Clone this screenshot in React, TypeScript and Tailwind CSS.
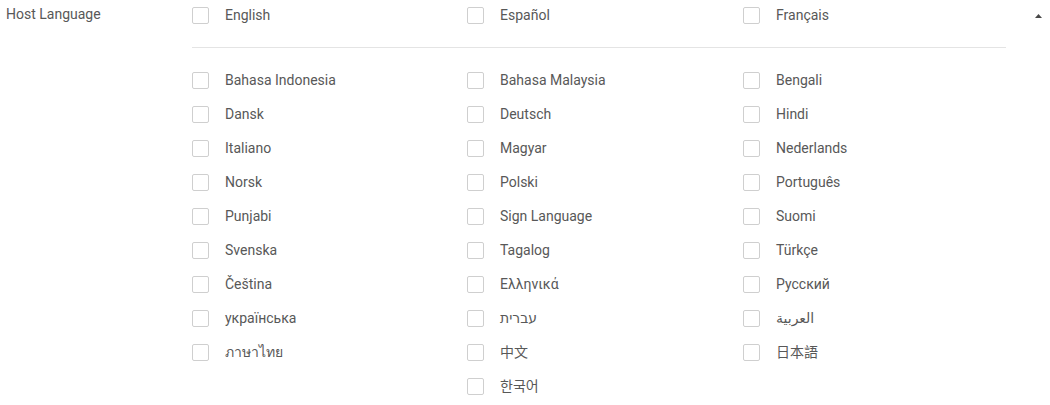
import React from "react";

const top = ["English", "Español", "Français"];
const rest = [
  "Bahasa Indonesia", "Bahasa Malaysia", "Bengali",
  "Dansk", "Deutsch", "Hindi",
  "Italiano", "Magyar", "Nederlands",
  "Norsk", "Polski", "Português",
  "Punjabi", "Sign Language", "Suomi",
  "Svenska", "Tagalog", "Türkçe",
  "Čeština", "Ελληνικά", "Русский",
  "українська", "עברית", "العربية",
  "ภาษาไทย", "中文", "日本語",
  null, "한국어", null,
];

function Item({ label }: { label: string | null }) {
  if (!label) return <div className="h-[17px]" />;
  return (
    <label className="flex items-center h-[17px]">
      <span className="w-[17px] h-[17px] shrink-0 rounded-[2px] border border-[#cfcfcf] bg-white" />
      <span className="ml-[16px] text-[14px] leading-[17px] text-[#585858] whitespace-nowrap">{label}</span>
    </label>
  );
}

export default function App() {
  return (
    <div
      className="w-[1050px] h-[405px] bg-white overflow-hidden flex"
      style={{ fontFamily: 'Roboto, "Noto Sans", "DejaVu Sans", "Noto Sans CJK SC", "Noto Sans CJK KR", sans-serif' }}
    >
      <div className="w-[192px] shrink-0 pl-[6px] pt-[6px] text-[14px] leading-[17px] text-[#585858]">
        Host Language
      </div>
      <div className="w-[814px] shrink-0 pt-[7px]">
        <div className="grid grid-cols-[275px_276px_1fr]">
          {top.map((t) => (
            <Item key={t} label={t} />
          ))}
        </div>
        <div className="mt-[23px] h-px bg-[#e4e4e4]" />
        <div className="mt-[24px] grid grid-cols-[275px_276px_1fr] gap-y-[17px]">
          {rest.map((t, i) => (
            <Item key={i} label={t} />
          ))}
        </div>
      </div>
      <div className="flex-1 flex justify-end pr-[8px] pt-[14px]">
        <svg width="7" height="4" viewBox="0 0 7 4">
          <path d="M0 4 L3.5 0 L7 4 Z" fill="#484848" />
        </svg>
      </div>
    </div>
  );
}
